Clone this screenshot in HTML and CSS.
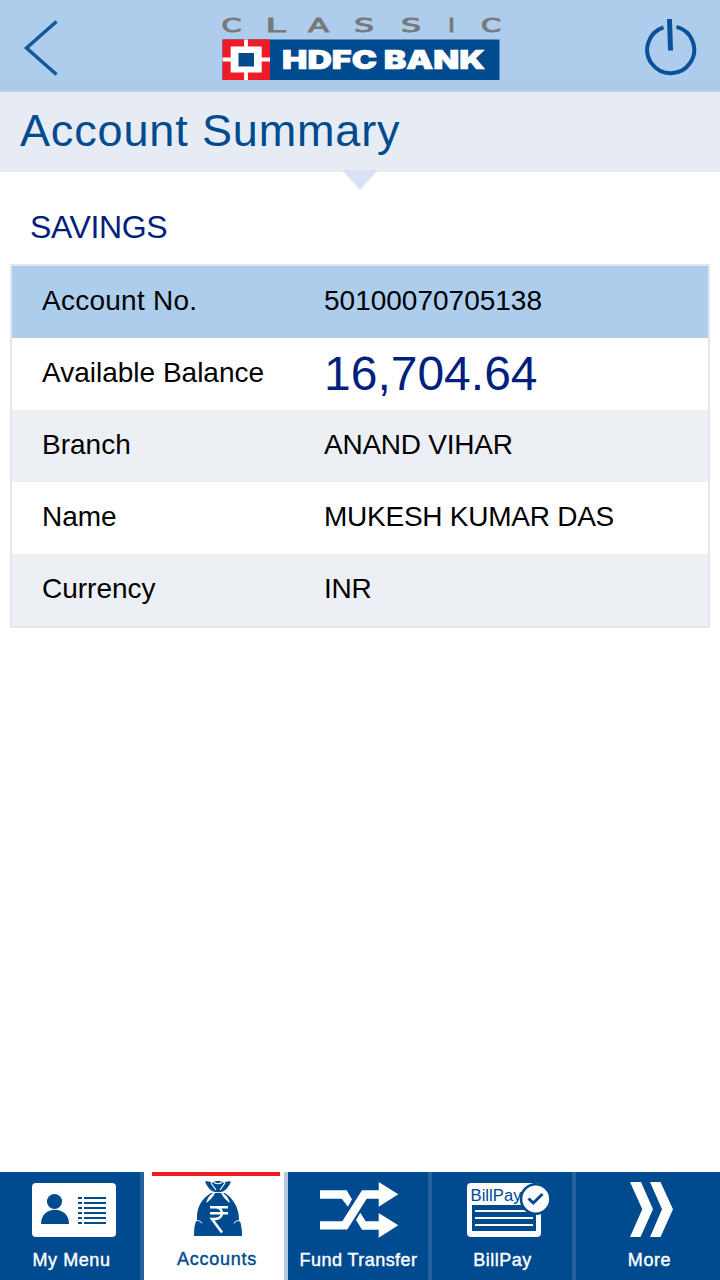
FILE: index.html
```
<!DOCTYPE html>
<html lang="en">
<head>
    <meta charset="UTF-8">
    <meta name="viewport" content="width=device-width, initial-scale=1.0">
    <title>Account Summary</title>
    <link rel="stylesheet" href="styles.css">
</head>
<body>
    <header class="top-bar">
        <svg class="back-icon" width="38" height="60" viewBox="0 0 38 60">
            <path d="M34.500 3.500L4.500 30L34.500 56.500"/>
        </svg>
        <svg class="logo" width="290" height="72" viewBox="-6 -6 290 72">
            <g class="logo-classic">
                <text x="-0.500" y="17" textLength="20" lengthAdjust="spacingAndGlyphs">C</text>
                <text x="43.500" y="17" textLength="20" lengthAdjust="spacingAndGlyphs">L</text>
                <text x="86" y="17" textLength="21" lengthAdjust="spacingAndGlyphs">A</text>
                <text x="132" y="17" textLength="20" lengthAdjust="spacingAndGlyphs">S</text>
                <text x="179" y="17" textLength="20" lengthAdjust="spacingAndGlyphs">S</text>
                <text x="226" y="17" textLength="7" lengthAdjust="spacingAndGlyphs">I</text>
                <text x="259" y="17" textLength="20" lengthAdjust="spacingAndGlyphs">C</text>
            </g>
            <rect x="0.500" y="24.500" width="277" height="40.500" fill="#004b8f"/>
            <rect x="0.500" y="24.500" width="47.500" height="40.500" fill="#ed1c28"/>
            <path d="M24 24.500V65M0.500 44.500H48" stroke="#fff" stroke-width="3.800"/>
            <rect x="8.700" y="31.500" width="31" height="26" fill="#fff"/>
            <rect x="16.500" y="38" width="15.500" height="13.500" fill="#004b8f"/>
            <text class="logo-bank" x="60" y="54" textLength="203" lengthAdjust="spacingAndGlyphs">HDFC BANK</text>
        </svg>
        <svg class="power-icon" width="54" height="60" viewBox="0 0 54 60">
            <path d="M20.500 9.300A23.500 23.500 0 1 0 33.500 8.900" stroke-width="4"/>
            <path d="M26.500 1L27.500 32.500" stroke-width="5"/>
        </svg>
    </header>

    <div class="title-bar">
        <h1>Account Summary</h1>
        <svg class="title-arrow" width="36" height="20" viewBox="0 0 36 20">
            <path d="M0 0H36L18 20Z" fill="#d9e2f2"/>
        </svg>
    </div>

    <main>
        <h2>SAVINGS</h2>
        <table class="account-table">
            <tr class="account-no">
                <th>Account No.</th>
                <td>50100070705138</td>
            </tr>
            <tr>
                <th>Available Balance</th>
                <td class="balance">16,704.64</td>
            </tr>
            <tr class="shaded">
                <th>Branch</th>
                <td class="caps">ANAND VIHAR</td>
            </tr>
            <tr>
                <th>Name</th>
                <td class="caps">MUKESH KUMAR DAS</td>
            </tr>
            <tr class="shaded">
                <th>Currency</th>
                <td class="caps">INR</td>
            </tr>
        </table>
    </main>

    <nav class="tabs">
        <a class="tab">
            <svg width="140" height="74" viewBox="0 0 140 74">
                <rect x="32" y="11" width="84" height="54" rx="4" fill="#fff"/>
                <circle cx="54.500" cy="29.500" r="7.600" fill="#004b8f"/>
                <path d="M41 52C41 43 47 37.700 55 37.700S69 43 69 52Z" fill="#004b8f"/>
                <path d="M78 26h4M84 26h22M78 31h4M84 31h22M78 36h4M84 36h22M78 41h4M84 41h22M78 46h4M84 46h22M78 51h4M84 51h22" stroke="#004b8f" stroke-width="2"/>
            </svg>
            <span>My Menu</span>
        </a>
        <a class="tab active">
            <svg width="140" height="74" viewBox="0 0 140 74">
                <path d="M61 9.500Q65 8.500 68 11Q71 8.500 74 9Q77 8.500 80 11Q83 8.500 87 9.500Q84 17 79 19.500Q74 21 69 19.500Q64 17 61 9.500Z" fill="#004b8f"/>
                <path d="M67 11L72 18M81 11L76 18M70 10.500Q74 13 78 10.500" fill="none" stroke="#fff" stroke-width="1.200"/>
                <path d="M67 21H81Q95 31 95 48Q98 52 98 64H50Q50 51 53 48Q52 30 67 21Z" fill="#004b8f"/>
                <path d="M69 21Q64 24 62 31Q68 27 71 21ZM79 21Q84 24 86 31Q80 27 77 21Z" fill="#fff"/>
                <path d="M51 49Q56 47.500 58 51.500M97 49Q92 47.500 90 51.500" fill="none" stroke="#fff" stroke-width="1"/>
                <path d="M66 35.300H84M66 41.300H84M67 35.300H72C80 36 80 47 71 47H68L78 60.500" fill="none" stroke="#fff" stroke-width="2.600"/>
            </svg>
            <span>Accounts</span>
        </a>
        <a class="tab transfer">
            <svg width="140" height="74" viewBox="0 0 140 74" fill="#fff">
                <path d="M32 49.300H54.300L74 18.300H90.700V10L110.300 22.300L90.700 34.700V26.700H78.700L59.300 57.500H32Z"/>
                <path d="M32 18.300H58.700L64 27.300L60 34.700L53.700 26.700H32Z"/>
                <path d="M72.300 40.700L77.700 49.300H90.700V41L110.300 53.300L90.700 65.700V57.700H74L68 48Z"/>
            </svg>
            <span>Fund Transfer</span>
        </a>
        <a class="tab billpay">
            <svg width="140" height="74" viewBox="0 0 140 74">
                <rect x="35" y="11" width="74" height="54" rx="4" fill="#fff"/>
                <rect x="40" y="33" width="64" height="26" fill="#004b8f"/>
                <path d="M43 39H101M43 46H101M43 53H101" stroke="#fff" stroke-width="2"/>
                <text class="card-text" x="38.500" y="28.500" textLength="51" lengthAdjust="spacingAndGlyphs">BillPay</text>
                <circle cx="103.700" cy="27" r="14.700" fill="#fff" stroke="#004b8f" stroke-width="2.600"/>
                <path d="M96.500 26.500L101.300 31L110.500 22" fill="none" stroke="#004b8f" stroke-width="3"/>
            </svg>
            <span>BillPay</span>
        </a>
        <a class="tab more">
            <svg width="144" height="74" viewBox="0 0 144 74" fill="#fff">
                <path d="M54 10H65L77 37.300L64.500 65H54L66.300 37.300Z"/>
                <path d="M74 10H84.500L97 37.300L84.500 65H74L86 37.300Z"/>
            </svg>
            <span>More</span>
        </a>
    </nav>
</body>
</html>
```

FILE: styles.css
```
* {
    box-sizing: border-box;
}

body {
    margin: 0;
    height: 1280px;
    display: flex;
    flex-direction: column;
    font-family: "Liberation Sans", Arial, sans-serif;
    background-color: #fff;
    color: #000;
}

/* Header */
.top-bar {
    height: 92px;
    padding: 0 23px 0 22px;
    display: flex;
    justify-content: space-between;
    align-items: flex-start;
    background: linear-gradient(#aecdec 80px, #abcbe8 81px, #abcbe8 89px, #b3d4f4 92px);
}

.back-icon {
    margin-top: 18px;
    fill: none;
    stroke: #11589c;
    stroke-width: 3.5;
}

.logo {
    margin: 9px 0 0 19px;
}

.logo-classic {
    font-family: "DejaVu Sans", sans-serif;
    font-size: 19px;
    fill: #77797b;
    stroke: #77797b;
    stroke-width: 0.9;
}

.logo-bank {
    font-family: Inter, "Liberation Sans", sans-serif;
    font-size: 26px;
    font-weight: 900;
    fill: #fff;
    stroke: #fff;
    stroke-width: 0.7;
}

.power-icon {
    margin-top: 18px;
    fill: none;
    stroke: #07529a;
}

/* Page title */
.title-bar {
    position: relative;
    height: 80px;
    padding-left: 20px;
    background-color: #e7ebf3;
}

h1 {
    margin: 0;
    font-size: 45px;
    font-weight: normal;
    line-height: 78px;
    letter-spacing: 0.85px;
    color: #004b8f;
}

.title-arrow {
    position: absolute;
    left: 342px;
    top: 78px;
}

main {
    flex: 1;
    padding: 0 10px;
}

h2 {
    margin: 0;
    padding: 35px 0 0 20px;
    height: 92px;
    font-size: 32px;
    font-weight: normal;
    line-height: 40px;
    letter-spacing: -0.4px;
    color: #001f7e;
}

.account-table {
    width: 700px;
    border: 2px solid #e1e6ef;
    border-spacing: 0;
    table-layout: fixed;
    font-size: 28px;
}

.account-table tr {
    height: 72px;
}

.account-table th, .account-table td {
    padding: 0 0 2px;
    font-weight: normal;
    text-align: left;
    line-height: 60px;
    white-space: nowrap;
}

.account-table th {
    width: 312px;
    padding-left: 30px;
}

.account-table .balance {
    padding: 0;
    font-size: 48px;
    color: #001f7e;
}

.account-table .caps {
    letter-spacing: -0.25px;
}

.account-no {
    background-color: #accdeb;
}

.account-no th {
    letter-spacing: 0.25px;
}

.shaded {
    background-color: #eceff4;
}

/* Bottom tabs */
.tabs {
    display: flex;
    height: 108px;
}

.tab {
    display: flex;
    flex-direction: column;
    align-items: center;
    width: 144px;
    background-color: #004b8f;
    border-right: 4px solid #2563a0;
    color: #fff;
    font-size: 18px;
    letter-spacing: 0.6px;
    -webkit-text-stroke: 0.4px;
}

.tab svg {
    display: block;
}

.tab span {
    padding-left: 3px;
    line-height: 28px;
    white-space: nowrap;
}

.tab.active {
    background: linear-gradient(#ed1c24, #ed1c24) 8px 0 / 128px 4px no-repeat #fff;
    border-right-color: #b3c8e0;
    color: #004b8f;
}

.tab.active span {
    padding-left: 6px;
    line-height: 26px;
    letter-spacing: 0.75px;
}

.tab.transfer span {
    padding-left: 1px;
    letter-spacing: 0.45px;
}

.tab.billpay span {
    padding-left: 1px;
    letter-spacing: 0.5px;
}

.tab.more {
    border-right: 0;
}

.card-text {
    font-size: 16px;
    letter-spacing: 0;
    fill: #004b8f;
}
```
